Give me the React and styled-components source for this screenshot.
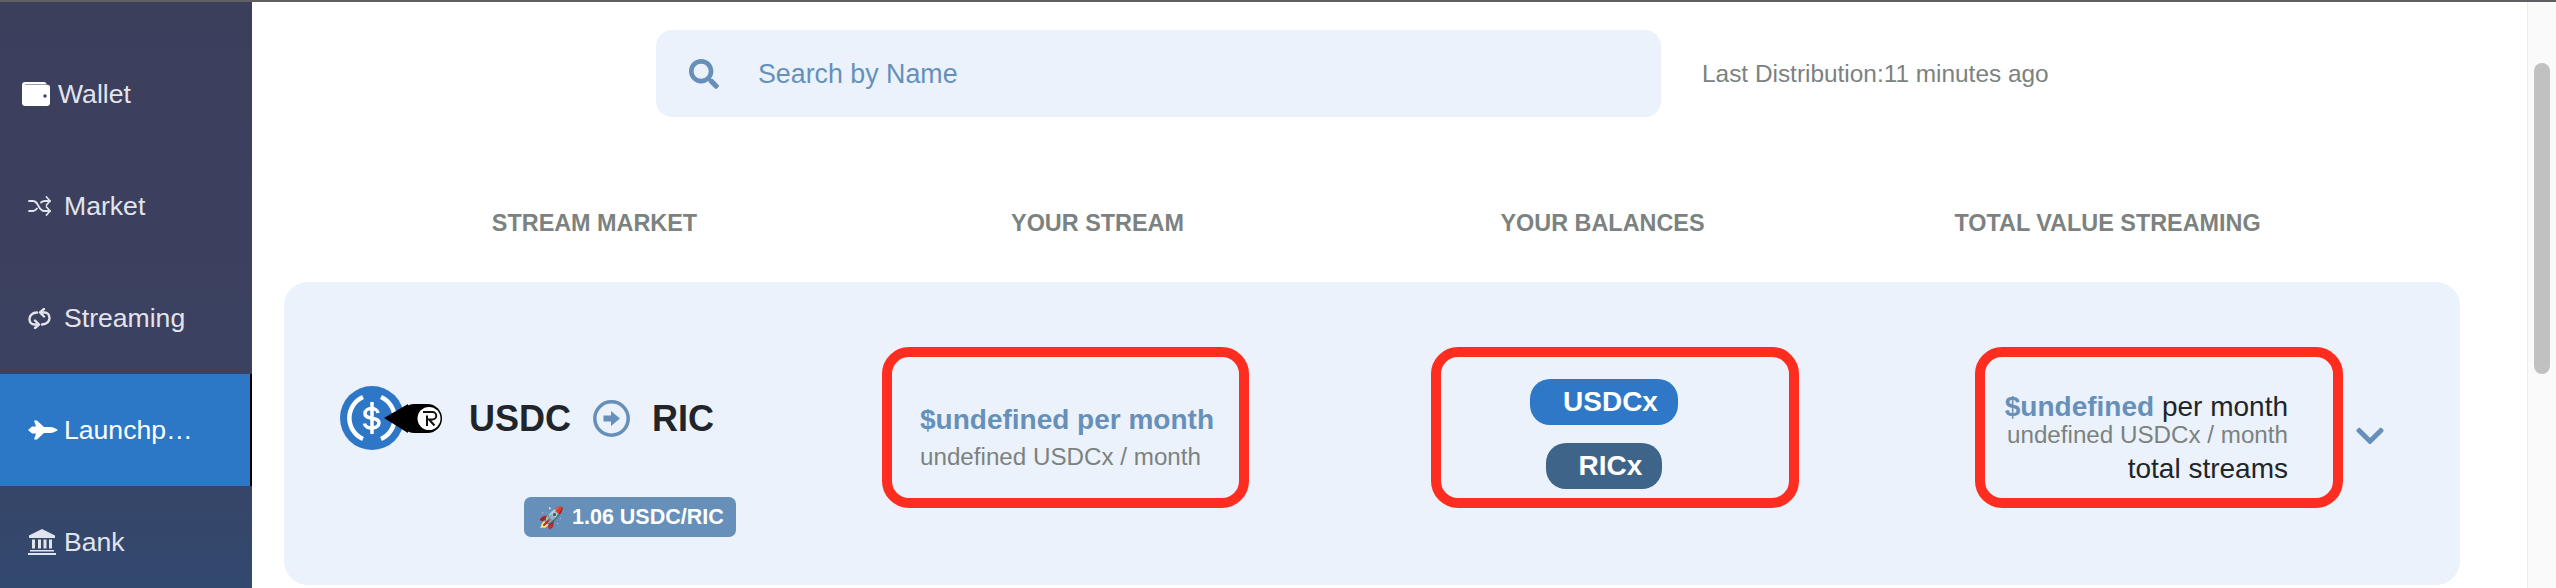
import styled, { createGlobalStyle } from 'styled-components';
import { FaSearch, FaChevronDown } from 'react-icons/fa';

const GlobalStyle = createGlobalStyle`
  html, body { margin: 0; padding: 0; height: 100%; overflow: hidden; background: #fff; }
  body { font-family: 'Liberation Sans', Arial, sans-serif; color: #212529; }
`;

const WalletIcon = () => (
  <svg width="28" height="24" viewBox="0 0 28 24">
    <path fill="#fff" d="M3 0h19c1.500 0 2.500 1 2.500 2.200H3.500c-.6 0-.6.6 0 .6H25.500c1.500 0 2.500 1 2.500 2.200V21c0 1.700-1.300 3-3 3H3c-1.700 0-3-1.300-3-3V3c0-1.700 1.300-3 3-3z" />
    <circle cx="23" cy="14" r="1.700" fill="#3c4160" />
  </svg>
);

const ShuffleIcon = () => (
  <svg width="23" height="20" viewBox="0 0 23 20" fill="none" stroke="#e2e4ec" strokeWidth="1.800" strokeLinecap="round" strokeLinejoin="round">
    <path d="M1 5h4c3 0 4 2 5.500 5s3 5 6 5H22" />
    <path d="M1 15h4c2 0 3-1 4-2.500M13 6.500C14 5.500 15 5 17 5h5" />
    <path d="M18.500 1 22 5l-3.500 4M18.500 11 22 15l-3.500 4" />
  </svg>
);

const StreamIcon = () => (
  <svg width="23" height="21" viewBox="0 0 23 21" fill="none" stroke="#e2e4ec" strokeWidth="2.400" strokeLinecap="round" strokeLinejoin="round">
    <path d="M9 4.500C4 4.500 1.500 8 1.500 11c0 3 2 5.500 5 5.500h3.500" />
    <path d="M7 12.500l4 4-4 3.500" />
    <path d="M14 16.500c5 0 7.500-3.500 7.500-6.500 0-3-2-5.500-5-5.500H13" />
    <path d="M16 1l-4 3.500 4 4" />
  </svg>
);

const ShuttleIcon = () => (
  <svg width="30" height="20" viewBox="0 0 30 20">
    <path fill="#fff" d="M0 10 4 6.500h4L6 .5h3l7 6.500h6c3 0 6 1.500 8 3-2 1.500-5 3-8 3h-6l-7 6.500H6l2-6H4z" />
  </svg>
);

const BankIcon = () => (
  <svg width="28" height="26" viewBox="0 0 28 26" fill="#e2e4ec">
    <path d="M14 0 27 6.500V9H1V6.500z" />
    <path d="M4 10.500h3v9H4zM10 10.500h3v9h-3zM15.500 10.500h3v9h-3zM21 10.500h3v9h-3z" />
    <path d="M2 21h24v1.500H2zM0 24h28v2H0z" />
  </svg>
);

const UsdcRicLogo = () => (
  <svg width="102" height="64" viewBox="0 0 102 64">
    <circle cx="32" cy="32" r="32" fill="#2e77c7" />
    <rect x="60" y="18" width="42" height="29" rx="14.500" fill="#000" />
    <circle cx="89" cy="32.500" r="11.500" fill="#fff" />
    <path d="M83 26h9.500a3.500 3.500 0 0 1 0 7.500H89l5.500 6M87 29.500V40" fill="none" stroke="#111" strokeWidth="2" />
    <path d="M23 11a23 23 0 0 0 0 42M41 11a23 23 0 0 1 0 42" fill="none" stroke="#fff" strokeWidth="4.500" />
    <path d="M38 27c-.5-6-13-6-13 .5 0 7 14 2.500 14 9.500 0 6.500-14 6.500-14.500 .5M32 16v32" fill="none" stroke="#fff" strokeWidth="3.500" />
    <path d="M44 32 68 18v29z" fill="#000" />
    <path d="M61 18 68 15v3zM61 47l7 3v-3z" fill="#ebf2fb" />
  </svg>
);

const ArrowCircle = () => (
  <svg width="37" height="37" viewBox="0 0 37 37">
    <circle cx="18.500" cy="18.500" r="16.700" fill="none" stroke="#6690b9" strokeWidth="3.500" />
    <path d="M10.500 15.500H18V11l9 7.500-9 7.500v-4.500h-7.500z" fill="#6690b9" />
  </svg>
);

const Page = styled.div`
  display: flex;
  flex-direction: column;
  height: 588px;
  width: 2556px;
`;
const TopLine = styled.div`
  height: 2px;
  background: #5f5f63;
  flex: none;
`;
const Body = styled.div`
  display: flex;
  flex: 1;
  min-height: 0;
`;
const Sidebar = styled.nav`
  width: 252px;
  flex: none;
  padding-top: 36px;
  box-sizing: border-box;
  overflow: hidden;
  background: linear-gradient(180deg, #3c3f5c 0%, #3b4160 60%, #32496f 100%);
`;
const NavItem = styled.div`
  display: flex;
  align-items: center;
  height: 112px;
  flex: none;
  box-sizing: border-box;
  padding-left: ${(props) => (props.wide ? 22 : 28)}px;
  font-size: 26.600px;
  color: ${(props) => (props.active ? '#fff' : '#e2e4ec')};
  background: ${(props) => (props.active ? '#2d77c7' : 'transparent')};
  border-right: ${(props) => (props.active ? '2px solid #000' : 'none')};
`;
const NavIcon = styled.span`
  display: flex;
  align-items: center;
  width: 36px;
  flex: none;
`;
const Main = styled.main`
  flex: 1;
  min-width: 0;
  padding-left: 32px;
  overflow: hidden;
`;
const TopRow = styled.div`
  display: flex;
  align-items: center;
  margin-top: 28px;
  margin-left: 372px;
`;
const SearchBox = styled.div`
  display: flex;
  align-items: center;
  width: 1005px;
  height: 87px;
  border-radius: 16px;
  background: #ebf2fb;
  padding-left: 33px;
  box-sizing: border-box;
  color: #6690b9;
  font-size: 26.800px;
`;
const SearchLabel = styled.span`
  margin-left: 39px;
  padding-top: 2px;
`;
const LastDistribution = styled.div`
  margin-left: 41px;
  font-size: 24.400px;
  color: #7b827f;
`;
const Headers = styled.div`
  display: grid;
  grid-template-columns: 501px 505px 505px 505px;
  margin-top: 93px;
  margin-left: 60px;
`;
const HeaderCell = styled.div`
  text-align: center;
  font-size: 23.400px;
  line-height: 26px;
  font-weight: 700;
  color: #7b827f;
`;
const Card = styled.div`
  display: flex;
  width: 2176px;
  height: 303px;
  margin-top: 46px;
  border-radius: 24px;
  background: #ebf2fb;
`;
const MarketCell = styled.div`
  width: 598px;
  flex: none;
  box-sizing: border-box;
  padding: 104px 0 0 56px;
`;
const MarketRow = styled.div`
  display: flex;
  align-items: center;
  font-size: 36px;
  font-weight: 700;
  color: #212529;
`;
const Pair = styled.span`
  margin-left: ${(props) => props.gap}px;
  padding-top: 2px;
`;
const ArrowWrap = styled.span`
  display: flex;
  margin-left: 22px;
`;
const PriceBadge = styled.div`
  display: flex;
  align-items: center;
  gap: 8px;
  width: 212px;
  height: 40px;
  box-sizing: border-box;
  margin: 47px 0 0 184px;
  padding-left: 14px;
  border-radius: 7px;
  background: #6690b9;
  color: #fff;
  font-size: 21.500px;
  font-weight: 700;
`;
const RocketIcon = styled.span`
  font-size: 21px;
  line-height: 1;
`;
const HighlightBox = styled.div`
  display: flex;
  flex-direction: column;
  justify-content: center;
  align-items: ${(props) => props.align || 'flex-start'};
  width: ${(props) => props.width || 367}px;
  height: 161px;
  flex: none;
  box-sizing: border-box;
  margin-top: 65px;
  margin-left: ${(props) => props.gap || 0}px;
  padding: ${(props) => props.pad};
  border: 10px solid #ff2d20;
  border-radius: 27px;
`;
const BoldValue = styled.div`
  font-size: 28px;
  font-weight: 700;
  color: #6690b9;
  line-height: 37px;
`;
const SubValue = styled.div`
  font-size: 24.200px;
  color: #7b827f;
  line-height: ${(props) => props.tight || 37}px;
`;
const PlainValue = styled.div`
  font-size: 28px;
  color: #212529;
  line-height: ${(props) => props.tight || 28}px;
`;
const Blue = styled.b`
  color: #6690b9;
`;
const TokenPill = styled.div`
  display: flex;
  align-items: center;
  height: 46px;
  padding: 0 20px 0 33px;
  margin-top: ${(props) => props.top || 0}px;
  border-radius: 20px;
  background: ${(props) => props.bg};
  color: #fff;
  font-size: 28px;
  font-weight: 700;
`;
const Chevron = styled.span`
  display: flex;
  margin: 138px 0 0 11px;
  color: #6690b9;
`;
const Scrollbar = styled.div`
  width: 29px;
  flex: none;
  box-sizing: border-box;
  padding: 61px 0 0 6px;
  background: #fafafa;
  border-left: 1px solid #ececec;
`;
const ScrollThumb = styled.div`
  width: 16px;
  height: 311px;
  border-radius: 8px;
  background: #c1c1c1;
`;

export default function App() {
  return (
    <Page>
      <GlobalStyle />
      <TopLine />
      <Body>
        <Sidebar>
          <NavItem wide>
            <NavIcon><WalletIcon /></NavIcon>Wallet
          </NavItem>
          <NavItem>
            <NavIcon><ShuffleIcon /></NavIcon>Market
          </NavItem>
          <NavItem>
            <NavIcon><StreamIcon /></NavIcon>Streaming
          </NavItem>
          <NavItem active>
            <NavIcon><ShuttleIcon /></NavIcon>Launchp…
          </NavItem>
          <NavItem>
            <NavIcon><BankIcon /></NavIcon>Bank
          </NavItem>
        </Sidebar>
        <Main>
          <TopRow>
            <SearchBox>
              <FaSearch size={30} />
              <SearchLabel>Search by Name</SearchLabel>
            </SearchBox>
            <LastDistribution>Last Distribution:11 minutes ago</LastDistribution>
          </TopRow>
          <Headers>
            <HeaderCell>STREAM MARKET</HeaderCell>
            <HeaderCell>YOUR STREAM</HeaderCell>
            <HeaderCell>YOUR BALANCES</HeaderCell>
            <HeaderCell>TOTAL VALUE STREAMING</HeaderCell>
          </Headers>
          <Card>
            <MarketCell>
              <MarketRow>
                <UsdcRicLogo />
                <Pair gap={27}>USDC</Pair>
                <ArrowWrap><ArrowCircle /></ArrowWrap>
                <Pair gap={22}>RIC</Pair>
              </MarketRow>
              <PriceBadge>
                <RocketIcon>🚀</RocketIcon>
                1.06 USDC/RIC
              </PriceBadge>
            </MarketCell>
            <HighlightBox pad="21px 0 0 28px">
              <BoldValue>$undefined per month</BoldValue>
              <SubValue>undefined USDCx / month</SubValue>
            </HighlightBox>
            <HighlightBox gap={182} width={368} align="center" pad="12px 22px 0 0">
              <TokenPill bg="#2e78c7">USDCx</TokenPill>
              <TokenPill bg="#3f6489" top={18}>RICx</TokenPill>
            </HighlightBox>
            <HighlightBox gap={176} width={368} align="flex-end" pad="26px 45px 0 0">
              <PlainValue><Blue>$undefined</Blue> per month</PlainValue>
              <SubValue tight={28}>undefined USDCx / month</SubValue>
              <PlainValue tight={40}>total streams</PlainValue>
            </HighlightBox>
            <Chevron><FaChevronDown size={32} /></Chevron>
          </Card>
        </Main>
        <Scrollbar>
          <ScrollThumb />
        </Scrollbar>
      </Body>
    </Page>
  );
}
